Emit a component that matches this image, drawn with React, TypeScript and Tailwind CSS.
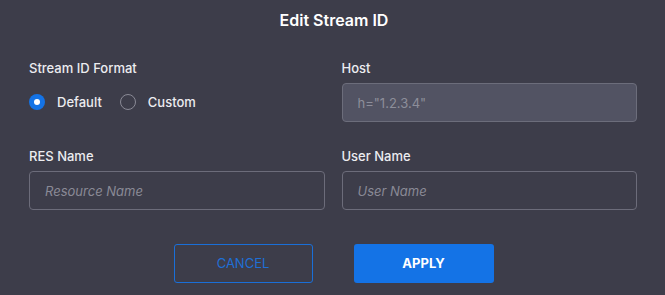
import { useState } from 'react';

export default function App() {
  const [format, setFormat] = useState<'default' | 'custom'>('default');

  return (
    <div
      className="w-full h-[295px] bg-[#3d3d4a] pl-[29px] pr-[28px] text-[#ececf0] overflow-hidden"
      style={{ fontFamily: 'Inter, "Noto Sans", sans-serif' }}
    >
      {/* Header */}
      <h1 className="pt-[8px] text-center text-[16px] leading-[24px] font-semibold text-white pl-[2px]">
        Edit Stream ID
      </h1>

      {/* Form */}
      <div className="mt-[28px] grid grid-cols-2 gap-x-[17px]">
        <div>
          <label className="block text-[13px] leading-[16px] font-medium">Stream ID Format</label>
          <div className="mt-[18px] flex items-center text-[13px] leading-[16px] font-medium">
            <button
              type="button"
              onClick={() => setFormat('default')}
              className="flex items-center gap-[12px]"
            >
              <span
                className={`w-[16px] h-[16px] rounded-full flex items-center justify-center ${
                  format === 'default' ? 'bg-[#1473e6]' : 'border border-[#8a8a96]'
                }`}
              >
                {format === 'default' && <span className="w-[6px] h-[6px] rounded-full bg-white" />}
              </span>
              Default
            </button>
            <button
              type="button"
              onClick={() => setFormat('custom')}
              className="ml-[18px] flex items-center gap-[12px]"
            >
              <span
                className={`w-[16px] h-[16px] rounded-full flex items-center justify-center ${
                  format === 'custom' ? 'bg-[#1473e6]' : 'border border-[#8a8a96]'
                }`}
              >
                {format === 'custom' && <span className="w-[6px] h-[6px] rounded-full bg-white" />}
              </span>
              Custom
            </button>
          </div>
        </div>

        <div>
          <label className="block text-[13px] leading-[16px] font-medium">Host</label>
          <input
            placeholder='h="1.2.3.4"'
            disabled
            className="mt-[7px] w-full h-[39px] px-[15px] bg-[#525363] border border-[#6c6d7b] rounded-[4px] text-[13px] placeholder:text-[#8d8e9a] outline-none"
          />
        </div>

        <div className="mt-[26px]">
          <label className="block text-[13px] leading-[16px] font-medium">RES Name</label>
          <input
            placeholder="Resource Name"
            className="mt-[7px] w-full h-[39px] px-[15px] bg-transparent border border-[#6c6c7a] rounded-[4px] text-[13px] italic placeholder:text-[#8a8a96] outline-none"
          />
        </div>

        <div className="mt-[26px]">
          <label className="block text-[13px] leading-[16px] font-medium">User Name</label>
          <input
            placeholder="User Name"
            className="mt-[7px] w-full h-[39px] px-[15px] bg-transparent border border-[#6c6c7a] rounded-[4px] text-[13px] italic placeholder:text-[#8a8a96] outline-none"
          />
        </div>
      </div>

      {/* Actions */}
      <div className="mt-[34px] flex justify-center gap-[41px] pl-[1px]">
        <button
          type="button"
          className="w-[139px] h-[39px] border border-[#1a6fd8] rounded-[3px] text-[#1f6fd6] text-[13px]"
        >
          CANCEL
        </button>
        <button
          type="button"
          className="w-[140px] h-[39px] bg-[#1473e6] rounded-[3px] text-white text-[13px] font-bold"
        >
          APPLY
        </button>
      </div>
    </div>
  );
}
